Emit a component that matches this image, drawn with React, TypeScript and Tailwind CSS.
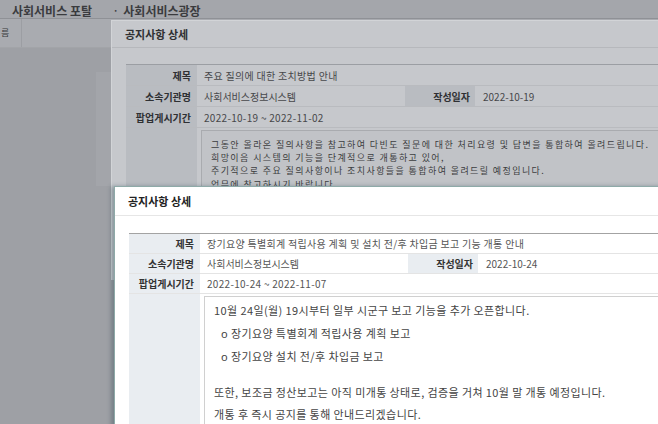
import React from "react";

type Tone = "back" | "front";

const tones = {
  back: {
    panel: "left-[111px] top-[20px] bg-[#c6c8cc] border-l border-t border-[#d2d4d7] text-[#3a3b3e]",
    header: "h-[27px] border-b border-[#b6b8bc] text-[#2f3033]",
    body: "pt-[16px]",
    table: "border-t border-[#9b9ea3]",
    row: "h-[21px] border-b border-[#b9bbbf]",
    label: "bg-[#b9bcc1] text-[#2f3033]",
    value: "text-[#46474a]",
    box: "bg-[#c1c3c7] border border-[#a9abaf] text-[#3c3d40]",
  },
  front: {
    panel: "left-[114px] top-[186px] bg-white border-l border-t border-[#8eaaa8] shadow-[-3px_0_4px_rgba(40,70,80,0.35)] text-[#333]",
    header: "h-[29px] border-b border-[#e6e6e6] text-[#222]",
    body: "pt-[17px]",
    table: "border-t border-[#a3a3a3]",
    row: "h-[20px] border-b border-[#e4e4e4]",
    label: "bg-[#e9edf1] text-[#333]",
    value: "text-[#555]",
    box: "bg-white border border-[#d0d0d0] text-[#444]",
  },
};

function Row({
  tone,
  label,
  value,
  label2,
  value2,
}: {
  tone: Tone;
  label: string;
  value: string;
  label2?: string;
  value2?: string;
}) {
  const t = tones[tone];
  return (
    <div className={`flex items-stretch text-[10px] ${t.row}`}>
      <div className={`w-[71px] shrink-0 flex items-center justify-end pr-[6px] font-bold ${t.label}`}>
        {label}
      </div>
      {label2 ? (
        <>
          <div className={`w-[208px] shrink-0 flex items-center pl-[7px] ${t.value}`}>{value}</div>
          <div className={`w-[70px] shrink-0 flex items-center justify-end pr-[5px] font-bold ${t.label}`}>
            {label2}
          </div>
          <div className={`flex-1 flex items-center pl-[8px] ${t.value}`}>{value2}</div>
        </>
      ) : (
        <div className={`flex-1 flex items-center pl-[7px] whitespace-nowrap tracking-[0.3px] ${t.value}`}>
          {value}
        </div>
      )}
    </div>
  );
}

function NoticeDialog({
  tone,
  title,
  org,
  date,
  period,
  children,
}: {
  tone: Tone;
  title: string;
  org: string;
  date: string;
  period: string;
  children: React.ReactNode;
}) {
  const t = tones[tone];
  return (
    <div className={`absolute w-[570px] h-[260px] ${t.panel}`}>
      <div className={`flex items-center px-[13px] text-[11px] font-bold ${t.header}`}>공지사항 상세</div>
      <div className={`px-[14px] ${t.body}`}>
        <div className={t.table}>
          <Row tone={tone} label="제목" value={title} />
          <Row tone={tone} label="소속기관명" value={org} label2="작성일자" value2={date} />
          <Row tone={tone} label="팝업게시기간" value={period} />
          <div className="flex h-[160px]">
            <div className={`w-[71px] shrink-0 ${t.label}`} />
            <div className="flex-1 pl-[4px] pt-[2px]">
              <div className={`h-full ${t.box}`}>{children}</div>
            </div>
          </div>
        </div>
      </div>
    </div>
  );
}

export default function App() {
  return (
    <div className="relative w-[658px] h-[424px] overflow-hidden bg-[#9ea0a5] font-['Noto_Sans_CJK_KR','Noto_Sans',sans-serif]">
      {/* page behind the overlay */}
      <div className="flex items-center h-[19px] pt-[3px] border-b border-[#8f9196] bg-[#a4a6ab] text-[12px] font-bold text-[#3a3b3e]">
        <span className="w-[113px] pl-[12px]">사회서비스 포탈</span>
        <span className="flex items-center gap-[5px]">
          <span className="text-[9px]">·</span>사회서비스광장
        </span>
      </div>
      <div className="flex h-[29px] border-b border-[#a2a4a8] bg-[#a9abb0]">
        <div className="w-[22px] flex items-center pl-[1px] text-[9px] text-[#3a3b3e] border-r border-[#9c9ea3]">
          름
        </div>
      </div>
      <div className="pl-[96px] pt-[24px]">
        <div className="w-[15px] h-[114px] bg-[#a3a5aa]" />
      </div>

      <NoticeDialog
        tone="back"
        title="주요 질의에 대한 조치방법 안내"
        org="사회서비스정보시스템"
        date="2022-10-19"
        period="2022-10-19 ~ 2022-11-02"
      >
        <div className="pt-[7px] pl-[9px] text-[9px] leading-[13.2px] tracking-[1.4px] whitespace-nowrap">
          <p>그동안 올라온 질의사항을 참고하여 다빈도 질문에 대한 처리요령 및 답변을 통합하여 올려드립니다.</p>
          <p>희망이음 시스템의 기능을 단계적으로 개통하고 있어,</p>
          <p>주기적으로 주요 질의사항이나 조치사항들을 통합하여 올려드릴 예정입니다.</p>
          <p>업무에 참고하시기 바랍니다.</p>
        </div>
      </NoticeDialog>

      <NoticeDialog
        tone="front"
        title="장기요양 특별회계 적립사용 계획 및 설치 전/후 차입금 보고 기능 개통 안내"
        org="사회서비스정보시스템"
        date="2022-10-24"
        period="2022-10-24 ~ 2022-11-07"
      >
        <div className="pt-[2px] pl-[9px] text-[11px] tracking-[0.4px] whitespace-nowrap">
          <p className="leading-[23px]">10월 24일(월) 19시부터 일부 시군구 보고 기능을 추가 오픈합니다.</p>
          <p className="leading-[23px] pl-[7px]">
            <span className="font-['Noto_Sans',sans-serif]">o</span> 장기요양 특별회계 적립사용 계획 보고
          </p>
          <p className="leading-[23px] pl-[7px]">
            <span className="font-['Noto_Sans',sans-serif]">o</span> 장기요양 설치 전/후 차입금 보고
          </p>
          <p className="leading-[22px] mt-[13px]">
            또한, 보조금 정산보고는 아직 미개통 상태로, 검증을 거쳐 10월 말 개통 예정입니다.
          </p>
          <p className="leading-[22px]">개통 후 즉시 공지를 통해 안내드리겠습니다.</p>
        </div>
      </NoticeDialog>
    </div>
  );
}
